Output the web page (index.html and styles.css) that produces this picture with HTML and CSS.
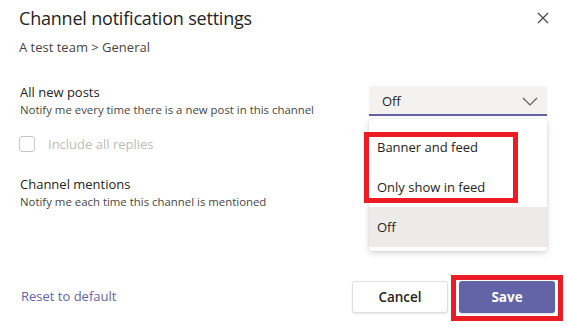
FILE: index.html
```html
<!DOCTYPE html>
<html>
<head>
<meta charset="utf-8">
<link rel="stylesheet" href="styles.css">
</head>
<body>
<div class="dialog">
  <div class="header">
    <h1 class="title">Channel notification settings</h1>
    <button class="close" aria-label="Close">
      <svg width="12" height="12" viewBox="0 0 12 12"><path d="M1 1 L11 11 M11 1 L1 11" stroke="#484644" stroke-width="1.2" fill="none"/></svg>
    </button>
  </div>
  <div class="crumb">A test team &gt; General</div>

  <div class="setting">
    <div class="setting-text">
      <div class="label">All new posts</div>
      <div class="desc">Notify me every time there is a new post in this channel</div>
    </div>
    <div class="select-wrap">
      <div class="select">
        <span>Off</span>
        <svg class="chev" width="16" height="9" viewBox="0 0 16 9"><path d="M1 1 L8 8 L15 1" stroke="#605e5c" stroke-width="1.2" fill="none"/></svg>
      </div>
      <div class="menu">
        <div class="item">Banner and feed</div>
        <div class="item">Only show in feed</div>
        <div class="item selected">Off</div>
        <div class="mark mark-menu"></div>
      </div>
    </div>
  </div>

  <label class="check-row">
    <span class="checkbox"></span>
    <span class="check-label">Include all replies</span>
  </label>

  <div class="setting setting-2">
    <div class="setting-text">
      <div class="label">Channel mentions</div>
      <div class="desc">Notify me each time this channel is mentioned</div>
    </div>
  </div>

  <div class="footer">
    <a class="reset" href="#">Reset to default</a>
    <div class="actions">
      <button class="btn btn-secondary">Cancel</button>
      <div class="save-wrap">
        <button class="btn btn-primary">Save</button>
        <div class="mark mark-save"></div>
      </div>
    </div>
  </div>
</div>
</body>
</html>
```
FILE: styles.css
```css
* { box-sizing: border-box; }
html, body { margin: 0; padding: 0; background: #ffffff; }
body {
  font-family: "Open Sans", "Noto Sans", sans-serif;
  color: #252423;
  width: 568px;
  height: 336px;
  overflow: hidden;
}
.dialog {
  padding: 6px 21px 0 19px;
}
.header {
  display: flex;
  justify-content: space-between;
  align-items: center;
  height: 24px;
}
.title {
  margin: 0;
  font-size: 18px;
  font-weight: 400;
  line-height: 24px;
  color: #252423;
  letter-spacing: -0.2px;
}
.close {
  border: 0;
  background: none;
  padding: 0;
  width: 12px;
  height: 12px;
  margin-right: -2px;
  margin-top: -1px;
  display: flex;
}
.crumb {
  margin-top: 7px;
  font-size: 13px;
  line-height: 20px;
  color: #484644;
}
.setting {
  display: flex;
  justify-content: space-between;
  align-items: flex-start;
  margin-top: 25px;
}
.setting-text { padding-left: 1px; }
.label {
  font-size: 13px;
  line-height: 20px;
  color: #252423;
}
.desc {
  font-size: 11.4px;
  line-height: 16px;
  color: #484644;
}
.select-wrap {
  position: relative;
  width: 178px;
  margin-top: 4px;
}
.select {
  height: 30px;
  background: #f3f2f1;
  border-bottom: 2px solid #6264a7;
  border-radius: 3px 3px 0 0;
  display: flex;
  align-items: center;
  justify-content: space-between;
  padding: 2px 9px 0 13px;
  font-size: 13px;
  color: #252423;
}
.chev { margin-top: 0; }
.menu {
  position: absolute;
  top: 33px;
  left: 0;
  right: 0;
  background: #ffffff;
  border-radius: 3px;
  box-shadow: 0 2px 6px rgba(0,0,0,0.16), 0 0 2px rgba(0,0,0,0.1);
  padding: 8px 0 4px 0;
}
.item {
  height: 40px;
  line-height: 40px;
  padding-left: 8px;
  font-size: 13px;
  color: #252423;
}
.item.selected { background: #edebe9; }
.mark {
  position: absolute;
  border: 5px solid #ed1c24;
}
.mark-menu {
  left: -5px;
  top: 13px;
  width: 154px;
  height: 71px;
}
.check-row {
  display: flex;
  align-items: center;
  gap: 13px;
  margin-top: 17px;
  height: 18px;
}
.checkbox {
  width: 16px;
  height: 16px;
  border: 1px solid #c8c6c4;
  border-radius: 3px;
}
.check-label {
  font-size: 13px;
  color: #bebbb8;
}
.setting-2 { margin-top: 21px; }
.footer {
  display: flex;
  justify-content: space-between;
  align-items: center;
  margin-top: 71px;
}
.reset {
  font-size: 13px;
  color: #6264a7;
  text-decoration: none;
  margin-left: 2px;
  margin-top: -3px;
}
.actions {
  display: flex;
  gap: 11px;
  margin-right: -8px;
}
.btn {
  width: 96px;
  height: 32px;
  border-radius: 3px;
  font-family: "Open Sans", "Noto Sans", sans-serif;
  font-size: 13.5px;
  font-weight: 600;
  cursor: pointer;
}
.btn-secondary {
  background: #ffffff;
  border: 1px solid #e1dfdd;
  color: #252423;
  box-shadow: 0 1px 2px rgba(0,0,0,0.1);
}
.btn-primary {
  background: #6264a7;
  border: 0;
  color: #ffffff;
  font-weight: 700;
  box-shadow: 0 1px 2px rgba(0,0,0,0.15);
}
.save-wrap { position: relative; }
.mark-save {
  left: -8px;
  top: -6px;
  width: 112px;
  height: 46px;
}
```
